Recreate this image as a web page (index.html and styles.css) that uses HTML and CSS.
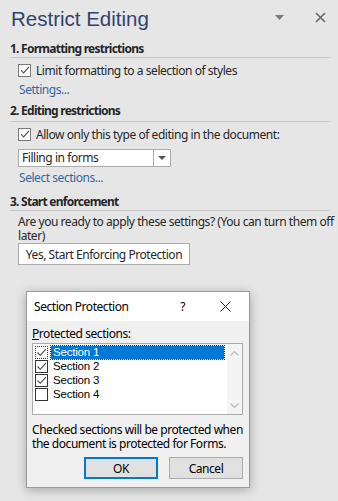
FILE: index.html
```html
<!DOCTYPE html>
<html lang="en">
<head>
  <meta charset="UTF-8">
  <meta name="viewport" content="width=device-width, initial-scale=1.0">
  <title>Restrict Editing</title>
  <link rel="stylesheet" href="styles.css">
</head>
<body>
  <div class="pane">
    <div class="pane-head">
      <h1>Restrict Editing</h1>
      <div class="pane-tools">
        <svg class="tool-menu" width="9" height="5" viewBox="0 0 9 5"><path d="M0 0h9L4.5 5z" fill="#7b7b7b"/></svg>
        <svg class="tool-close" width="11" height="11" viewBox="0 0 11 11"><path d="M1 1l9 9M10 1l-9 9" stroke="#666" stroke-width="1.6"/></svg>
      </div>
    </div>

    <section class="step">
      <h2>1. Formatting restrictions</h2>
      <div class="check-row">
        <span class="box"><svg width="10" height="10" viewBox="0 0 10 10"><path d="M1 5.2l2.6 2.6L9 1.8" fill="none" stroke="#555" stroke-width="1.2"/></svg></span>
        <span>Limit formatting to a selection of styles</span>
      </div>
      <a class="link link-settings" href="#">Settings...</a>
    </section>

    <section class="step">
      <h2 class="step-two">2. Editing restrictions</h2>
      <div class="check-row">
        <span class="box"><svg width="10" height="10" viewBox="0 0 10 10"><path d="M1 5.2l2.6 2.6L9 1.8" fill="none" stroke="#555" stroke-width="1.2"/></svg></span>
        <span>Allow only this type of editing in the document:</span>
      </div>
      <div class="combo">
        <span class="combo-value">Filling in forms</span>
        <span class="combo-arrow"><svg width="8" height="4" viewBox="0 0 8 4"><path d="M0 0h8L4 4z" fill="#555"/></svg></span>
      </div>
      <a class="link link-sections" href="#">Select sections...</a>
    </section>

    <section class="step">
      <h2 class="step-three">3. Start enforcement</h2>
      <p class="note">Are you ready to apply these settings? (You can turn them off later)</p>
      <button class="enforce-btn" type="button">Yes, Start Enforcing Protection</button>
    </section>
  </div>

  <div class="dialog">
    <div class="dialog-title">
      <span class="dialog-name">Section Protection</span>
      <span class="dialog-help">?</span>
      <svg class="dialog-close" width="11" height="11" viewBox="0 0 11 11"><path d="M0.5 0.5l10 10M10.5 0.5l-10 10" stroke="#222" stroke-width="1"/></svg>
    </div>
    <div class="dialog-body">
      <div class="list-label"><u>P</u>rotected sections:</div>
      <div class="listbox">
        <ul class="list-items">
          <li class="item focused">
            <span class="lbox"><svg width="11" height="11" viewBox="0 0 11 11"><path d="M1.5 5.5l2.8 2.8L9.8 2.2" fill="none" stroke="#444" stroke-width="1.1"/></svg></span>
            <span class="item-text selected">Section 1</span>
          </li>
          <li class="item">
            <span class="lbox"><svg width="11" height="11" viewBox="0 0 11 11"><path d="M1.5 5.5l2.8 2.8L9.8 2.2" fill="none" stroke="#444" stroke-width="1.1"/></svg></span>
            <span class="item-text">Section 2</span>
          </li>
          <li class="item">
            <span class="lbox"><svg width="11" height="11" viewBox="0 0 11 11"><path d="M1.5 5.5l2.8 2.8L9.8 2.2" fill="none" stroke="#444" stroke-width="1.1"/></svg></span>
            <span class="item-text">Section 3</span>
          </li>
          <li class="item">
            <span class="lbox"></span>
            <span class="item-text">Section 4</span>
          </li>
        </ul>
        <div class="scrollbar">
          <svg width="9" height="5" viewBox="0 0 9 5"><path d="M0.5 4.5l4-4 4 4" fill="none" stroke="#bdbdbd" stroke-width="1.2"/></svg>
          <svg width="9" height="5" viewBox="0 0 9 5"><path d="M0.5 0.5l4 4 4-4" fill="none" stroke="#bdbdbd" stroke-width="1.2"/></svg>
        </div>
      </div>
      <p class="dialog-note">Checked sections will be protected when the document is protected for Forms.</p>
      <div class="dialog-buttons">
        <button class="ok-btn" type="button">OK</button>
        <button class="cancel-btn" type="button">Cancel</button>
      </div>
    </div>
  </div>
</body>
</html>
```

FILE: styles.css
```css
body {
  margin: 0;
  padding: 0;
  font-family: 'Noto Sans', 'Open Sans', Arial, sans-serif;
  font-size: 12px;
  letter-spacing: -0.45px;
  background-color: #E6E6E6;
  color: #262626;
  height: 501px;
  overflow: hidden;
}
.pane {
  padding: 0 8px 0 10px;
}
.pane-head {
  height: 40px;
  display: flex;
  align-items: flex-start;
  justify-content: space-between;
}
h1 {
  margin: 5px 0 0 1px;
  font-family: 'Liberation Sans', Arial, sans-serif;
  font-size: 20.5px;
  line-height: 28px;
  font-weight: 400;
  letter-spacing: 0;
  color: #2E4470;
}
.pane-tools {
  display: flex;
  align-items: center;
  gap: 31px;
  margin: 12px 4px 0 0;
}
h2 {
  margin: 0;
  font-size: 12px;
  line-height: 17px;
  font-weight: 700;
  letter-spacing: -0.75px;
  color: #262626;
  border-bottom: 1px solid #C8C8C8;
}
h2.step-two {
  margin-top: 3px;
  padding-bottom: 2px;
}
h2.step-three {
  margin-top: 6px;
}
.check-row {
  display: flex;
  align-items: center;
  height: 18px;
  margin: 3px 0 0 8px;
}
.box {
  width: 11px;
  height: 11px;
  border: 1px solid #7A7A7A;
  background-color: #FFFFFF;
  margin-right: 5px;
  display: flex;
  align-items: center;
  justify-content: center;
}
.link {
  display: block;
  margin-left: 9px;
  line-height: 18px;
  color: #2F66A8;
  text-decoration: none;
}
.link-settings {
  margin-top: 2px;
}
.link-sections {
  margin-top: 2px;
}
.combo {
  display: flex;
  width: 151px;
  height: 16px;
  margin: 6px 0 0 8px;
  background-color: #FFFFFF;
  border: 1px solid #ABABAB;
}
.combo-value {
  flex: 1;
  padding-left: 3px;
  line-height: 16px;
}
.combo-arrow {
  width: 16px;
  border-left: 1px solid #ABABAB;
  display: flex;
  align-items: center;
  justify-content: center;
}
.note {
  margin: 4px -8px 0 8px;
  line-height: 14px;
}
.enforce-btn {
  margin: 0 0 0 8px;
  height: 22px;
  width: 172px;
  padding: 0;
  font-family: inherit;
  font-size: 12px;
  letter-spacing: -0.45px;
  white-space: nowrap;
  color: #262626;
  background-color: #FFFFFF;
  border: 1px solid #ABABAB;
}

/* dialog on top of the pane */
.dialog {
  position: absolute;
  left: 26px;
  top: 291px;
  width: 222px;
  height: 195px;
  border: 1px solid #9A9A9A;
  background-color: #F0F0F0;
  box-shadow: 0 2px 10px rgba(0,0,0,0.28);
  color: #000000;
}
.dialog-title {
  height: 29px;
  background-color: #FFFFFF;
  display: flex;
  align-items: center;
  padding-left: 7px;
}
.dialog-name {
  flex: 1;
}
.dialog-help {
  margin-right: 35px;
}
.dialog-close {
  margin-right: 18px;
}
.dialog-body {
  padding: 0 6px 0 5px;
}
.list-label {
  margin-top: 6px;
  line-height: 14px;
}
.listbox {
  display: flex;
  height: 70px;
  margin-top: 2px;
  background-color: #FFFFFF;
  border: 1px solid #ABABAB;
}
.list-items {
  flex: 1;
  list-style: none;
  margin: 0;
  padding: 1px 3px 0 2px;
}
.item {
  display: flex;
  align-items: center;
  height: 14px;
}
.lbox {
  width: 11px;
  height: 11px;
  border: 1px solid #333333;
  margin-right: 3px;
  display: flex;
  align-items: center;
  justify-content: center;
}
.focused .lbox {
  border-style: dotted;
}
.item-text {
  flex: 1;
  height: 13px;
  line-height: 13px;
  padding-left: 2px;
  font-family: 'Liberation Sans', Arial, sans-serif;
  font-size: 11.5px;
  letter-spacing: -0.2px;
}
.item-text.selected {
  background-color: #0078D7;
  color: #FFFFFF;
  outline: 1px dotted #333333;
}
.scrollbar {
  width: 15px;
  display: flex;
  flex-direction: column;
  justify-content: space-between;
  align-items: center;
  padding: 7px 0 6px;
  background-color: #F4F4F4;
}
.dialog-note {
  margin: 8px 0 0 0;
  line-height: 14px;
}
.dialog-buttons {
  display: flex;
  justify-content: flex-end;
  gap: 11px;
  margin-top: 6px;
}
.dialog-buttons button {
  width: 74px;
  height: 22px;
  padding: 0;
  font-family: inherit;
  font-size: 12px;
  letter-spacing: -0.45px;
  color: #000000;
  background-color: #E1E1E1;
  border: 1px solid #ADADAD;
}
.dialog-buttons .ok-btn {
  border: 2px solid #0078D7;
}
```
